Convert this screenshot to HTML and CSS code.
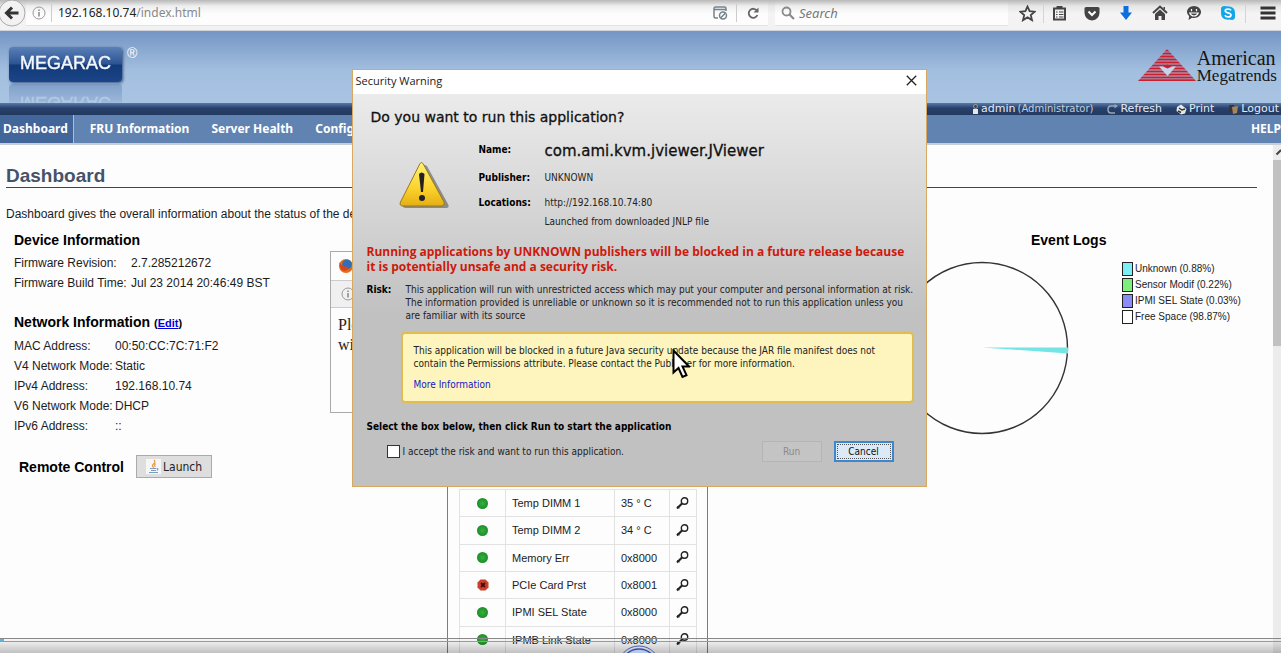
FILE: index.html
```html
<!DOCTYPE html>
<html lang="en">
<head>
  <meta charset="UTF-8" />
  <title>MegaRAC - Dashboard</title>
  <link rel="stylesheet" href="styles.css">
</head>
<body>

<!-- browser bar -->
<div class="toolbar">
  <button class="back" aria-label="Back">
    <svg width="28" height="28" viewBox="0 0 28 28"><circle cx="13" cy="13" r="13" fill="#f2f2f2" stroke="#aaa"/><path d="M19.500 13H8M13 7.500L7.500 13l5.500 5.500" fill="none" stroke="#333" stroke-width="3"/></svg>
  </button>
  <div class="urlbar">
    <svg width="14" height="14" viewBox="0 0 14 14"><circle cx="7" cy="7" r="6" fill="none" stroke="#999"/><path d="M7 6v4.500M7 3.500v1.500" stroke="#888" stroke-width="1.500"/></svg>
    <span class="url">192.168.10.74<span class="path">/index.html</span></span>
    <button class="reader" aria-label="Blocked content">
      <svg width="16" height="16" viewBox="0 0 16 16" fill="none" stroke="#74828c" stroke-width="1.500"><path d="M6 13H3.500Q2 13 2 11.500V3.500Q2 2 3.500 2h9Q14 2 14 3.500V6M2 4.500h12"/><circle cx="11" cy="10.500" r="3.500"/><path d="M8.800 12.800l4.500-4.500"/></svg>
    </button>
    <button class="reload" aria-label="Reload">
      <svg width="14" height="14" viewBox="0 0 14 14"><path d="M11 4.800A4.500 4.500 0 1 0 11.400 9" fill="none" stroke="#666" stroke-width="1.800"/><path d="M12.500 1.500v5h-5z" fill="#666"/></svg>
    </button>
  </div>
  <label class="search">
    <svg width="14" height="14" viewBox="0 0 14 14" fill="none" stroke="#8a8a8a"><circle cx="5.500" cy="5.500" r="4" stroke-width="1.800"/><path d="M8.500 8.500L13 13" stroke-width="2.200"/></svg>
    <input type="text" placeholder="Search" aria-label="Search">
  </label>
  <div class="tools">
    <button aria-label="Bookmark"><svg width="17" height="17" viewBox="0 0 17 17"><path d="M8.500 1.500l2.100 4.700 5.100.5-3.900 3.400 1.200 5-4.500-2.700L4 15.100l1.200-5L1.300 6.700l5.100-.5z" fill="none" stroke="#444" stroke-width="1.800"/></svg></button>
    <button class="sep" aria-label="Library"><svg width="15" height="16" viewBox="0 0 15 16"><path d="M2 3.500h11v11H2z" fill="none" stroke="#444" stroke-width="2"/><path d="M4.500 1h6v3h-6z" fill="#444"/><path d="M4 7h1.500M7 7h4.500M4 9.500h1.500M7 9.500h4.500M4 12h1.500M7 12h4.500" stroke="#444" stroke-width="1.200"/></svg></button>
    <button aria-label="Pocket"><svg width="16" height="15" viewBox="0 0 16 15"><path d="M2 1h12q1.500 0 1.500 1.500V7Q15 13.500 8 14.500 1 13.500.5 7V2.500Q.5 1 2 1z" fill="#444"/><path d="M4.500 5.500L8 9l3.500-3.500" fill="none" stroke="#fff" stroke-width="2"/></svg></button>
    <button aria-label="Downloads"><svg width="14" height="16" viewBox="0 0 14 16"><path d="M4.500 1h5v6.500H13L7 15 1 7.500h3.500z" fill="#0c6fdc"/></svg></button>
    <button aria-label="Home"><svg width="16" height="16" viewBox="0 0 16 16"><path d="M1 8l7-6.500L15 8" fill="none" stroke="#444" stroke-width="2"/><path d="M3 9l5-4.500L13 9v6H9.500v-4h-3v4H3zM11.500 2H13v3l-1.500-1.500z" fill="#444"/></svg></button>
    <button aria-label="Chat"><svg width="16" height="16" viewBox="0 0 16 16"><path d="M8 1c4 0 7 2.800 7 6s-3 6-7 6q-1 0-2-.2L2.500 15l.7-3.700Q1 9.500 1 7c0-3.200 3-6 7-6z" fill="#444"/><path d="M5.500 4v2.200M10.500 4v2.200M3.800 8h8.400Q11 11 8 11T3.800 8z" stroke="#fff" stroke-width="1.200" fill="none"/></svg></button>
    <button aria-label="Skype"><svg width="16" height="16" viewBox="0 0 16 16"><path d="M1 4q0-3 3.500-3 1 0 1.500.3Q15 .5 15 8q0 1 0 1.500Q15.800 15 11.500 15q-1 0-1.500-.4Q1 15.500 1 8q0-1 .2-1.500Q1 5.500 1 4z" fill="#12a5e8"/><path d="M11 5.300Q10.400 4 8 4 5.300 4 5.300 5.800q0 1.500 2.700 2 3 .6 3 2.200 0 2-3 2Q5.500 12 5 10.300" fill="none" stroke="#fff" stroke-width="1.700"/></svg></button>
    <button class="sep menu" aria-label="Menu"><svg width="16" height="14" viewBox="0 0 16 14"><path d="M.5 2h15M.5 7h15M.5 12h15" stroke="#333" stroke-width="3"/></svg></button>
  </div>
</div>

<!-- page header -->
<header class="banner">
  <div class="brand"><div class="megarac">MEGARAC</div><span class="reg">®</span></div>
  <div class="ami">
    <svg width="58" height="34" viewBox="0 0 58 34">
      <defs><clipPath id="tri"><path d="M29 0L58 32H0z"/></clipPath></defs>
      <g clip-path="url(#tri)">
        <path d="M0 1.500h58M0 4.500h58M0 7.500h58M0 10.500h58M0 13.500h58M0 16.500h58M0 19.500h58M0 22.500h58M0 25.500h58M0 28.500h58M0 31.200h58" stroke="#c8202f" stroke-width="1.800"/>
        <path d="M21 17.500h17L29.500 27z" fill="#c4d6ec"/>
        <path d="M25 17.500l4.500-2 4.500 2-4.500 2z" fill="#c8202f"/>
      </g>
    </svg>
    <div class="ami-name"><span class="american">American</span><span class="megatrends">Megatrends</span></div>
  </div>
</header>
<div class="strip">
  <span class="user"><svg width="7" height="11" viewBox="0 0 7 11"><circle cx="3.500" cy="2.500" r="2" fill="#444" stroke="#ccc" stroke-width=".6"/><path d="M1 5h5v5H1z" fill="#e8e8e0"/></svg>admin <small>(Administrator)</small></span>
  <a href="#"><svg width="11" height="11" viewBox="0 0 11 11"><path d="M9 2H4Q1 2 1 5.500T4 9h4" fill="none" stroke="#99a5b8" stroke-width="1.500"/><path d="M7.500 0L11 2 7.500 4.500z" fill="#99a5b8"/></svg>Refresh</a>
  <a href="#"><svg width="11" height="11" viewBox="0 0 11 11"><path d="M1 3l4-2.500L10.500 5 9 9.500 5 10.500.5 7z" fill="#e8e8e8"/><path d="M3 4l3 2 3-1M2 7l3 1.500" stroke="#333" stroke-width="1.500" fill="none"/></svg>Print</a>
  <a href="#"><svg width="11" height="11" viewBox="0 0 11 11"><path d="M1 1h5v7H1z" fill="#3a3530"/><path d="M4 3l6-1-1 7-4 1z" fill="#a9845a"/></svg>Logout</a>
</div>
<nav class="nav">
  <a class="active" href="#">Dashboard</a>
  <a href="#">FRU Information</a>
  <a href="#">Server Health</a>
  <a href="#">Configuration</a>
  <a class="help" href="#">HELP</a>
</nav>

<div class="page">
  <main class="content">
    <h1>Dashboard</h1>
    <p class="intro">Dashboard gives the overall information about the status of the device</p>

    <div class="columns">
      <section class="left">
        <h2>Device Information</h2>
        <dl class="device">
          <dt>Firmware Revision:</dt><dd>2.7.285212672</dd>
          <dt>Firmware Build Time:</dt><dd>Jul 23 2014 20:46:49 BST</dd>
        </dl>
        <h2>Network Information <small>(<a href="#">Edit</a>)</small></h2>
        <dl class="network">
          <dt>MAC Address:</dt><dd>00:50:CC:7C:71:F2</dd>
          <dt>V4 Network Mode:</dt><dd>Static</dd>
          <dt>IPv4 Address:</dt><dd>192.168.10.74</dd>
          <dt>V6 Network Mode:</dt><dd>DHCP</dd>
          <dt>IPv6 Address:</dt><dd>::</dd>
        </dl>
        <div class="remote">
          <h2>Remote Control</h2>
          <button class="launch"><svg width="15" height="15" viewBox="0 0 15 15"><rect width="15" height="15" fill="#f6f6f6"/><path d="M8 1q2 2-.5 4T8 8.500M9.500 4.500Q8 6 9 8" fill="none" stroke="#e8963c" stroke-width="1.200"/><path d="M4 9.500h6.500M5 11.500h5M3 13.500h9M11 9.500q2 0 0 2" fill="none" stroke="#7b9cc0" stroke-width="1.100"/></svg>Launch</button>
        </div>
      </section>

      <section class="sensors">
        <table>
          <tr><td><span class="dot"></span></td><td>Temp DIMM 1</td><td>35 ° C</td><td><svg class="lens" viewBox="0 0 13 13"><use href="#lens"/></svg></td></tr>
          <tr><td><span class="dot"></span></td><td>Temp DIMM 2</td><td>34 ° C</td><td><svg class="lens" viewBox="0 0 13 13"><use href="#lens"/></svg></td></tr>
          <tr><td><span class="dot"></span></td><td>Memory Err</td><td>0x8000</td><td><svg class="lens" viewBox="0 0 13 13"><use href="#lens"/></svg></td></tr>
          <tr><td><svg class="bad" width="12" height="12" viewBox="0 0 12 12"><path d="M3.500.5h5l3 3v5l-3 3h-5l-3-3v-5z" fill="#c8412f"/><path d="M4 4l4 4M8 4L4 8" stroke="#4a0d08" stroke-width="1.800"/></svg></td><td>PCIe Card Prst</td><td>0x8001</td><td><svg class="lens" viewBox="0 0 13 13"><use href="#lens"/></svg></td></tr>
          <tr><td><span class="dot"></span></td><td>IPMI SEL State</td><td>0x8000</td><td><svg class="lens" viewBox="0 0 13 13"><use href="#lens"/></svg></td></tr>
          <tr><td><span class="dot"></span></td><td>IPMB Link State</td><td>0x8000</td><td><svg class="lens" viewBox="0 0 13 13"><g id="lens" fill="none" stroke="#222"><circle cx="8.500" cy="4" r="3.200" stroke-width="1.400"/><path d="M6 6.500L1 11.500" stroke-width="2.200"/><path d="M1 9.500l2.500 1.500" stroke-width="1"/></g></svg></td></tr>
        </table>
      </section>

      <section class="logs">
        <h2>Event Logs</h2>
        <div class="chart">
          <svg width="174" height="174" viewBox="0 0 174 174"><circle cx="87" cy="87" r="85.500" fill="#fdfdfd" stroke="#333" stroke-width="1.400"/><path d="M87 86.500h86v6z" fill="#74e4e4"/></svg>
          <ul>
            <li><i class="unknown"></i>Unknown (0.88%)</li>
            <li><i class="modif"></i>Sensor Modif (0.22%)</li>
            <li><i class="sel"></i>IPMI SEL State (0.03%)</li>
            <li><i class="free"></i>Free Space (98.87%)</li>
          </ul>
        </div>
      </section>
    </div>
  </main>
  <div class="scrollbar">
    <svg width="8" height="15" viewBox="0 0 8 15"><path d="M3.500 9.500L8 5" fill="none" stroke="#444" stroke-width="2"/></svg>
    <div class="thumb"></div>
  </div>
</div>

<!-- viewer popup, behind the dialog -->
<div class="popup">
  <div class="popup-title"><svg width="16" height="16" viewBox="0 0 16 16"><circle cx="8" cy="8" r="7" fill="#e66a1c"/><circle cx="9" cy="6.500" r="4.800" fill="#2f6fb5"/><path d="M1.500 4Q3 8 7 8.500q3 0 4 1.500-2 3.500-6 2.500-4-2-3.500-8.500z" fill="#d8451a"/></svg></div>
  <div class="popup-url"><svg width="14" height="14" viewBox="0 0 14 14"><circle cx="7" cy="7" r="6" fill="none" stroke="#999"/><path d="M7 6v4.500M7 3.500v1.500" stroke="#888" stroke-width="1.500"/></svg></div>
  <p>Please<br>will</p>
</div>

<!-- java security dialog -->
<div class="overlay">
  <div class="dialog" role="dialog" aria-labelledby="dlgTitle">
    <div class="titlebar">
      <span id="dlgTitle">Security Warning</span>
      <button aria-label="Close"><svg width="11" height="11" viewBox="0 0 11 11"><path d="M.8.800l9.400 9.400M10.200.8L.8 10.200" stroke="#222" stroke-width="1.300"/></svg></button>
    </div>
    <div class="dialog-body">
      <h3>Do you want to run this application?</h3>
      <div class="details">
        <svg class="warning" width="54" height="50" viewBox="0 0 54 50">
          <defs>
            <linearGradient id="gold" x1="0" y1="0" x2="0" y2="1"><stop offset="0" stop-color="#fff27a"/><stop offset=".6" stop-color="#fbd22c"/><stop offset="1" stop-color="#e5ae12"/></linearGradient>
          </defs>
          <path d="M26 4Q24 3 24 5L4 44q-1 3 3 3h40q4 0 2-4L28 5z" fill="#000" opacity=".35"/>
          <path d="M21 2.500q1.500-2 3 0L45 41q1 4-3 4H4q-4 0-2.500-4z" fill="url(#gold)" stroke="#9a7a14" stroke-width="1"/>
          <path d="M20 13q2.500-3 5.500 0L24 31h-2z" fill="#222"/><circle cx="23" cy="37" r="3" fill="#222"/>
        </svg>
        <dl>
          <dt>Name:</dt><dd class="app">com.ami.kvm.jviewer.JViewer</dd>
          <dt>Publisher:</dt><dd>UNKNOWN</dd>
          <dt>Locations:</dt><dd>http://192.168.10.74:80<br>Launched from downloaded JNLP file</dd>
        </dl>
      </div>
      <p class="alert">Running applications by UNKNOWN publishers will be blocked in a future release because<br>it is potentially unsafe and a security risk.</p>
      <div class="risk">
        <b>Risk:</b>
        <p>This application will run with unrestricted access which may put your computer and personal information at risk.<br>The information provided is unreliable or unknown so it is recommended not to run this application unless you<br>are familiar with its source</p>
      </div>
      <div class="note">
        <p>This application will be blocked in a future Java security update because the JAR file manifest does not<br>contain the Permissions attribute. Please contact the Publisher for more information.</p>
        <a href="#">More Information</a>
      </div>
      <p class="select">Select the box below, then click Run to start the application</p>
      <div class="actions">
        <label><input type="checkbox">I accept the risk and want to run this application.</label>
        <button disabled>Run</button>
        <button class="cancel">Cancel</button>
      </div>
    </div>
  </div>
</div>

<svg class="cursor" width="18" height="30" viewBox="0 0 18 30"><path d="M1.500 1.500v22l5-4.500 4 9 4-1.800-4-8.700H17z" fill="#fff" stroke="#000" stroke-width="2"/></svg>

<!-- video player bar -->
<div class="player">
  <div class="track"><div class="played"></div></div>
  <svg width="44" height="8" viewBox="0 0 44 8"><circle cx="22" cy="22" r="21" fill="none" stroke="#4a5fb0" stroke-width="1"/><circle cx="22" cy="22" r="18" fill="#b9c8ec" stroke="#3350b0" stroke-width="1.500"/></svg>
</div>

</body>
</html>
```

FILE: styles.css
```css
* { box-sizing: border-box; }

body {
  margin: 0;
  height: 100vh;
  overflow: hidden;
  display: flex;
  flex-direction: column;
  background: #fdfdfd;
  color: #1c1c1c;
  font: 12px "Liberation Sans", Arial, sans-serif;
}

h1, h2, h3, p, dl, dd, ul { margin: 0; padding: 0; }
button { font: inherit; cursor: pointer; }
svg { display: block; flex: none; }

/* browser bar */
.toolbar {
  display: flex;
  flex: none;
  height: 31px;
  border-bottom: 1px solid #d0d4da;
  background: linear-gradient(#b8b8b8, #e6e6e6 6px, #f4f4f4 14px, #f2f2f2);
}
.toolbar button {
  display: flex;
  align-items: center;
  justify-content: center;
  padding: 0;
  border: none;
  background: none;
}
.toolbar .back { width: 26px; height: 27px; overflow: hidden; }
.urlbar, .search {
  display: flex;
  align-items: center;
  height: 26px;
  background: linear-gradient(#b8b8b8, #eee 6px, #fdfdfd 14px);
  border-bottom: 1px solid #e2e2e2;
}
.urlbar { flex: 1; padding-left: 6px; }
.url {
  flex: 1;
  margin-left: 5px;
  padding-left: 6px;
  border-left: 1px solid #ccc;
  font: 12px/18px "Noto Sans", sans-serif;
  color: #222;
}
.url .path { color: #888; }
.urlbar .reader { width: 32px; }
.urlbar .reload { width: 32px; height: 18px; border-left: 1px solid #ccc; }
.search { width: 233px; margin-left: 7px; padding-left: 6px; gap: 4px; }
.search input {
  flex: 1;
  min-width: 0;
  padding: 0;
  border: none;
  background: none;
  font: italic 13px "Noto Sans", sans-serif;
}
.search input::placeholder { color: #777; }
.tools { display: flex; align-items: center; height: 26px; padding-left: 4px; }
.tools button { width: 34px; height: 20px; }
.tools button:first-child { width: 31px; }
.tools .sep { width: 32px; border-left: 1px solid #d4d4d4; }
.tools .menu { width: 36px; justify-content: flex-end; padding-right: 5px; }

/* page header */
.banner {
  display: flex;
  flex: none;
  justify-content: space-between;
  align-items: flex-start;
  height: 72px;
  padding: 16px 4px 0 9px;
  overflow: hidden;
  background: linear-gradient(#7496c4, #a3bfdf 40px, #a9c4e3);
}
.brand { display: flex; gap: 5px; }
.megarac {
  width: 113px;
  height: 35px;
  border-radius: 4px;
  background: linear-gradient(#5b80b6, #2c5494 17px, #123a78 18px, #1b4588);
  box-shadow: 1px 1px 3px #33507d;
  color: #f4f7fb;
  font-size: 18px;
  line-height: 33px;
  text-align: center;
  -webkit-text-stroke: 0.4px #f4f7fb;
  -webkit-box-reflect: below 2px linear-gradient(transparent 20%, rgba(0, 0, 0, 0.25));
}
.reg { color: #fff; font-size: 14px; line-height: 12px; }
.ami { display: flex; gap: 1px; padding-top: 2px; }
.ami-name {
  display: flex;
  flex-direction: column;
  color: #151515;
  font-family: "Liberation Serif", serif;
  line-height: 17px;
}
.american { font-size: 20px; line-height: 19px; }
.megatrends { font-size: 17px; line-height: 16px; }

.strip {
  display: flex;
  flex: none;
  justify-content: flex-end;
  align-items: center;
  gap: 14px;
  height: 12px;
  padding-right: 2px;
  background: linear-gradient(#5a7aa8, #28426c 5px, #22395f);
  color: #e4eaf3;
  font: 11px/12px "DejaVu Sans", sans-serif;
}
.strip span, .strip a { display: flex; gap: 2px; align-items: center; color: inherit; text-decoration: none; }
.strip small { font-size: 10px; color: #c4cedd; }

.nav {
  display: flex;
  flex: none;
  height: 30px;
  border-bottom: 2px solid #c9ced6;
  background: #6083b1;
  font: bold 12px/28px "Noto Sans", sans-serif;
}
.nav a { padding: 0 11px; color: #fff; text-decoration: none; }
.nav .active {
  margin-right: 5px;
  padding: 0 5px 0 3px;
  background: #42659a;
  border-right: 1px solid #a9bedb;
}
.nav .help { margin-left: auto; padding-right: 0; }

/* page */
.page { display: flex; flex: 1; min-height: 0; }
.content { flex: 1; min-width: 0; padding: 20px 16px 0 6px; overflow: hidden; }
h1 {
  height: 23px;
  border-bottom: 1px solid #444;
  color: #46526a;
  font-size: 19px;
  line-height: 21px;
}
.intro { margin-top: 16px; line-height: 20px; }
h2 { color: #000; font-size: 14px; line-height: 20px; }
h2 small { font-size: 11px; }
h2 a { color: #0000d8; }

.columns { display: grid; grid-template-columns: minmax(0, 441px) 261px 1fr; margin-top: 6px; }
.left { padding-left: 8px; }
.left dl { display: grid; margin: 3px 0 19px; line-height: 20px; }
.device { grid-template-columns: 117px 1fr; }
.network { grid-template-columns: 101px 1fr; }
.remote { display: flex; align-items: center; gap: 12px; padding-left: 5px; }
.launch {
  display: flex;
  align-items: center;
  gap: 2px;
  height: 23px;
  padding: 0 9px;
  border: 1px solid #aaa;
  background: #dedede;
  color: #222;
  font: 12px "DejaVu Sans Condensed", sans-serif;
}

.sensors {
  padding: 259px 10px 0 11px;
  border: solid #6d7da8;
  border-width: 0 1px;
}
.sensors table { width: 100%; height: 165px; border-collapse: collapse; }
.sensors td { padding: 0 6px; border: 1px solid #e2e2e2; font-size: 11px; }
.sensors td:nth-child(1) { width: 46px; }
.sensors td:nth-child(2) { width: 109px; }
.sensors td:nth-child(3) { width: 55px; }
.dot {
  display: block;
  width: 11px;
  height: 11px;
  margin: 0 auto;
  border-radius: 50%;
  background: radial-gradient(#35b03e, #128020);
}
.bad { margin: 0 auto; }
.lens { width: 13px; height: 13px; }

.logs { padding-left: 160px; }
.logs h2 { padding-left: 163px; }
.chart { display: flex; justify-content: flex-end; gap: 53px; padding: 11px 17px 0 0; }
.chart ul { width: 118px; list-style: none; font-size: 10px; line-height: 16px; white-space: nowrap; }
.chart li { display: flex; align-items: center; gap: 2px; }
.chart i { width: 11px; height: 14px; border: 1px solid #222; flex: none; }
.unknown { background: #7ceff5; }
.modif { background: #7cef7c; }
.sel { background: #8c8cf5; }
.free { background: #fff; }

.scrollbar { width: 8px; background: #ececec; }
.thumb { height: 186px; background: #c1c1c1; }

/* popup behind the dialog */
.popup {
  position: absolute;
  left: 330px;
  top: 251px;
  width: 400px;
  height: 162px;
  border: 1px solid #aaa;
  background: #fdfdfd;
  font: 16px/20px "Liberation Serif", serif;
}
.popup-title { padding: 6px 7px; }
.popup-url { padding: 6px 10px; background: #f0f0f0; border: solid #ccc; border-width: 1px 0; }
.popup p { padding: 7px; }

/* dialog */
.overlay {
  position: absolute;
  inset: 0;
  display: flex;
  justify-content: center;
  align-items: flex-start;
  padding: 69px 3px 0 0;
}
.dialog {
  width: 575px;
  border: 1px solid #d9a860;
  color: #222;
  font: 10px/13px "DejaVu Sans Condensed", sans-serif;
}
.titlebar {
  display: flex;
  justify-content: space-between;
  align-items: center;
  height: 24px;
  padding: 0 9px 3px 3px;
  background: #fff;
  font: 11px "Open Sans", sans-serif;
}
.titlebar button { padding: 0; border: none; background: none; }
.dialog-body {
  padding: 13px 12px 24px 14px;
  background: linear-gradient(#ebebeb, #c1c1c1 220px);
}
h3 {
  margin-left: 4px;
  color: #111;
  font: 14px/20px "DejaVu Sans", sans-serif;
  -webkit-text-stroke: 0.3px #111;
}
.details { display: flex; margin-top: 13px; }
.warning { margin: 21px 26px 0 32px; }
.details dl { display: grid; grid-template-columns: 66px 1fr; row-gap: 6px; line-height: 19px; }
.details dt { color: #000; font-weight: bold; }
.details .app {
  color: #111;
  font: 15px/22px "DejaVu Sans", sans-serif;
  -webkit-text-stroke: 0.3px #111;
}
.alert {
  margin-top: 13px;
  color: #cc1a0c;
  font: bold 12px/15px "Open Sans", sans-serif;
  white-space: nowrap;
}
.risk { display: flex; margin-top: 9px; white-space: nowrap; }
.risk b { width: 39px; color: #000; }
.note {
  margin: 10px 0 0 34px;
  padding: 10px 11px;
  border: 2px solid #e0bd4e;
  border-radius: 4px;
  background: #fdf5bd;
}
.note a { display: block; margin-top: 8px; color: #1616c8; text-decoration: none; }
.note p { white-space: nowrap; }
.select { margin-top: 17px; color: #000; font-weight: bold; }
.actions { display: flex; align-items: center; gap: 12px; margin-top: 8px; padding-right: 20px; }
.actions label { display: flex; align-items: center; gap: 3px; margin: 0 auto 0 20px; }
.actions input {
  appearance: none;
  width: 13px;
  height: 13px;
  margin: 0;
  border: 1px solid #333;
  background: #fff;
}
.actions button {
  width: 60px;
  height: 21px;
  padding: 0;
  border: 1px solid #b5b5b5;
  background: #c4c4c4;
  color: #8a8a8a;
}
.actions .cancel {
  border: 2px solid #3d86d0;
  outline: 1px dotted #555;
  outline-offset: -4px;
  background: #dceaf8;
  color: #111;
}

.cursor { position: absolute; left: 672px; top: 349px; }

/* video player bar */
.player {
  position: absolute;
  left: 0;
  right: 0;
  bottom: 0;
  height: 15px;
  border-top: 1px solid #888;
  background: linear-gradient(rgba(0, 0, 0, 0.02), rgba(0, 0, 0, 0.24));
  display: flex;
  flex-direction: column;
  align-items: center;
}
.track { width: 100%; height: 3px; border-bottom: 1px solid #999; }
.played { width: 4px; height: 2px; background: #5ab4dc; }
.player svg { margin: 3px 4px 0 0; }
```
